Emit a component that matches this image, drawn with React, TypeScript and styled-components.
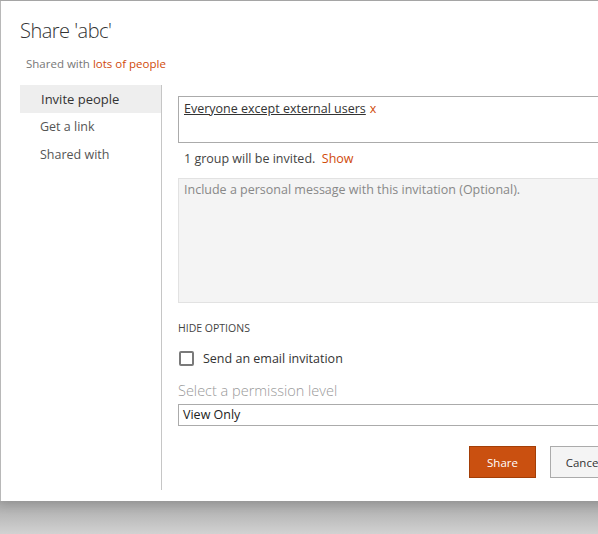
import React from 'react'
import styled, { createGlobalStyle } from 'styled-components'

const GlobalStyle = createGlobalStyle`
  html, body {
    margin: 0;
    padding: 0;
    width: 598px;
    height: 534px;
    overflow: hidden;
    background: #d3d3d3;
    font-family: "Open Sans", "Noto Sans", sans-serif;
  }
`

const Page = styled.div`
  width: 598px;
  height: 534px;
  overflow: hidden;
  background: linear-gradient(#a9a9a9 0px, #a9a9a9 1px, #a8a8a8 501px, #d2d2d2 534px);
`

const Dialog = styled.div`
  width: 680px;
  height: 500px;
  margin-top: 1px;
  box-sizing: border-box;
  background: #fff;
  border-left: 1px solid #b8b8b8;
  box-shadow: 0 4px 10px rgba(0, 0, 0, 0.12);
  padding: 16px 0 0 19px;
`

const Title = styled.h1`
  margin: 0;
  font-family: "Open Sans", sans-serif;
  font-weight: 300;
  font-size: 20px;
  line-height: 28px;
  color: #333;
  letter-spacing: -0.5px;
`

const SharedLine = styled.div`
  margin: 11px 0 0 6px;
  font-size: 11.5px;
  line-height: 16px;
  color: #777;
`

const OrangeLink = styled.span`
  color: #d04a0a;
`

const Body = styled.div`
  display: flex;
  margin-top: 13px;
`

const Nav = styled.nav`
  width: 141px;
  height: 405px;
  border-right: 1px solid #c6c6c6;
  display: flex;
  flex-direction: column;
`

const NavItem = styled.div<{ $active?: boolean }>`
  height: 28px;
  line-height: 28px;
  padding-left: ${p => (p.$active ? 21 : 20)}px;
  font-size: ${p => (p.$active ? 13 : 12.5)}px;
  color: ${p => (p.$active ? '#333' : '#555')};
  background: ${p => (p.$active ? '#eeeeee' : 'transparent')};
`

const Content = styled.div`
  flex: 1;
  padding: 11px 0 0 16px;
  display: flex;
  flex-direction: column;
`

const PeopleBox = styled.div`
  height: 47px;
  box-sizing: border-box;
  border: 1px solid #ababab;
  padding: 3px 5px;
  font-size: 12.5px;
  line-height: 18px;
  color: #333;
`

const Person = styled.span`
  text-decoration: underline;
`

const RemoveX = styled.span`
  color: #d04a0a;
  margin-left: 4px;
`

const InviteInfo = styled.div`
  margin: 7px 0 0 6px;
  font-size: 12.5px;
  line-height: 18px;
  color: #444;
`

const MessageBox = styled.div`
  margin-top: 10px;
  height: 125px;
  box-sizing: border-box;
  background: #f4f4f4;
  border: 1px solid #e2e2e2;
  padding: 2px 5px;
  font-size: 12.5px;
  line-height: 18px;
  color: #888;
`

const OptionsToggle = styled.div`
  margin-top: 17px;
  font-size: 10.5px;
  line-height: 16px;
  color: #444;
`

const CheckRow = styled.label`
  display: flex;
  align-items: center;
  margin-top: 14px;
  gap: 9px;
  font-size: 12.5px;
  color: #333;
  padding-left: 1px;
`

const CheckBox = styled.span`
  width: 11px;
  height: 11px;
  border: 2px solid #7a7a7a;
  border-radius: 2px;
  display: inline-block;
`

const PermissionLabel = styled.div`
  margin-top: 14px;
  font-size: 14.5px;
  font-weight: 300;
  line-height: 20px;
  color: #999;
`

const SelectBox = styled.div`
  margin-top: 3px;
  height: 22px;
  box-sizing: border-box;
  border: 1px solid #ababab;
  padding-left: 4px;
  font-size: 12.5px;
  line-height: 20px;
  color: #222;
`

const Buttons = styled.div`
  display: flex;
  margin-top: 20px;
  gap: 14px;
  padding-left: 291px;
`

const Button = styled.button<{ $primary?: boolean }>`
  width: 67px;
  height: 32px;
  flex-shrink: 0;
  font-family: "Open Sans", sans-serif;
  font-size: 11.5px;
  border: 1px solid ${p => (p.$primary ? '#a33e07' : '#ababab')};
  background: ${p => (p.$primary ? '#ca5010' : '#f4f4f4')};
  color: ${p => (p.$primary ? '#fff' : '#333')};
  padding: 0;
  cursor: pointer;
`

export default function App() {
  return (
    <Page>
      <GlobalStyle />
      <Dialog>
        <Title>Share 'abc'</Title>
        <SharedLine>
          Shared with <OrangeLink>lots of people</OrangeLink>
        </SharedLine>
        <Body>
          <Nav>
            <NavItem $active>Invite people</NavItem>
            <NavItem>Get a link</NavItem>
            <NavItem>Shared with</NavItem>
          </Nav>
          <Content>
            <PeopleBox>
              <Person>Everyone except external users</Person>
              <RemoveX>x</RemoveX>
            </PeopleBox>
            <InviteInfo>
              1 group will be invited.&nbsp;&nbsp;<OrangeLink>Show</OrangeLink>
            </InviteInfo>
            <MessageBox>Include a personal message with this invitation (Optional).</MessageBox>
            <OptionsToggle>HIDE OPTIONS</OptionsToggle>
            <CheckRow>
              <CheckBox />
              Send an email invitation
            </CheckRow>
            <PermissionLabel>Select a permission level</PermissionLabel>
            <SelectBox>View Only</SelectBox>
            <Buttons>
              <Button $primary>Share</Button>
              <Button>Cancel</Button>
            </Buttons>
          </Content>
        </Body>
      </Dialog>
    </Page>
  )
}
